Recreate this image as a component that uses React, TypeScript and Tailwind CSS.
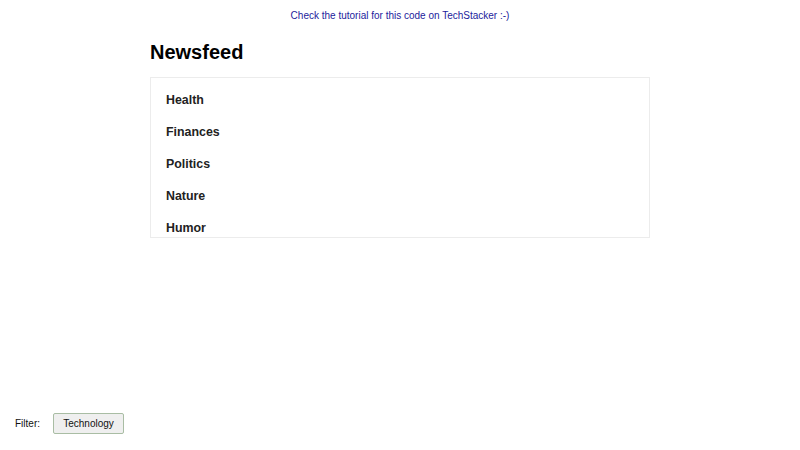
import React from 'react';

const topics = ['Health', 'Finances', 'Politics', 'Nature', 'Humor'];

export default function App() {
  return (
    <div className="relative h-[450px] w-[800px] bg-white font-['Liberation_Sans',Arial,sans-serif]">
      <div className="pt-[10px] text-center text-[10px] leading-[12px] text-[#1c1c9c]">
        Check the tutorial for this code on TechStacker :-)
      </div>

      <div className="mx-auto w-[500px]">
        <h1 className="mt-[17px] text-[20px] font-bold leading-[26px] text-black">Newsfeed</h1>

        <div className="mt-[12px] h-[161px] overflow-hidden border border-[#ececec]">
          <div className="px-[15px] pt-[6px]">
            {topics.map((t) => (
              <div key={t} className="h-8 text-[12.4px] font-bold leading-[32px] text-[#222]">
                {t}
              </div>
            ))}
          </div>
        </div>
      </div>

      <div className="absolute bottom-[16px] left-[15px] flex items-center gap-[13px] text-[10px] text-[#111]">
        <span>Filter:</span>
        <button className="h-[21px] w-[71px] rounded-[2px] border border-[#a9bda4] bg-[#efefef] text-[10px] text-[#111]">
          Technology
        </button>
      </div>
    </div>
  );
}
